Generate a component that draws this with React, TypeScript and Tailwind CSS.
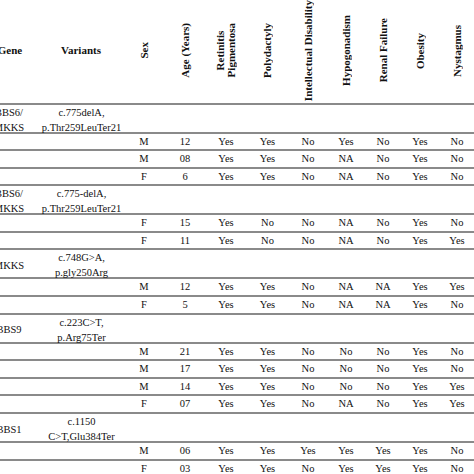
import React from "react";

type Row =
  | { kind: "group"; gene: string[]; variant: string[] }
  | { kind: "data"; cells: string[] };

const rows: Row[] = [
  { kind: "group", gene: ["BBS6/", "MKKS"], variant: ["c.775delA,", "p.Thr259LeuTer21"] },
  { kind: "data", cells: ["M", "12", "Yes", "Yes", "No", "Yes", "No", "Yes", "No"] },
  { kind: "data", cells: ["M", "08", "Yes", "Yes", "No", "NA", "No", "Yes", "No"] },
  { kind: "data", cells: ["F", "6", "Yes", "Yes", "No", "NA", "No", "Yes", "No"] },
  { kind: "group", gene: ["BBS6/", "MKKS"], variant: ["c.775-delA,", "p.Thr259LeuTer21"] },
  { kind: "data", cells: ["F", "15", "Yes", "No", "No", "NA", "No", "Yes", "No"] },
  { kind: "data", cells: ["F", "11", "Yes", "No", "No", "NA", "No", "Yes", "Yes"] },
  { kind: "group", gene: ["MKKS"], variant: ["c.748G>A,", "p.gly250Arg"] },
  { kind: "data", cells: ["M", "12", "Yes", "Yes", "No", "NA", "NA", "Yes", "Yes"] },
  { kind: "data", cells: ["F", "5", "Yes", "Yes", "No", "NA", "NA", "Yes", "No"] },
  { kind: "group", gene: ["BBS9"], variant: ["c.223C>T,", "p.Arg75Ter"] },
  { kind: "data", cells: ["M", "21", "Yes", "Yes", "No", "No", "No", "Yes", "No"] },
  { kind: "data", cells: ["M", "17", "Yes", "Yes", "No", "No", "No", "Yes", "No"] },
  { kind: "data", cells: ["M", "14", "Yes", "Yes", "No", "No", "No", "Yes", "Yes"] },
  { kind: "data", cells: ["F", "07", "Yes", "Yes", "No", "NA", "No", "Yes", "Yes"] },
  { kind: "group", gene: ["BBS1"], variant: ["c.1150", "C>T,Glu384Ter"] },
  { kind: "data", cells: ["M", "06", "Yes", "Yes", "Yes", "Yes", "Yes", "Yes", "No"] },
  { kind: "data", cells: ["F", "03", "Yes", "Yes", "No", "Yes", "Yes", "Yes", "No"] },
];

const GRID =
  "grid grid-cols-[60px_84px_42px_40px_42px_41px_40px_36px_38px_36px_38px]";

function Rot({ children }: { children: React.ReactNode }) {
  return (
    <div className="flex items-center justify-center">
      <div className="[writing-mode:vertical-rl] rotate-180 whitespace-nowrap text-center leading-[11px]">
        {children}
      </div>
    </div>
  );
}

export default function App() {
  return (
    <div
      className="w-[474px] h-[474px] overflow-hidden bg-white text-[#111111]"
      style={{ fontFamily: '"Liberation Serif", "Times New Roman", serif' }}
    >
      <div className="ml-[-21px] w-[498px]">
        <div className={`${GRID} h-[102.5px] font-bold text-[11px] pb-[2px]`}>
          <div className="flex items-center justify-center pl-[2px]">Gene</div>
          <div className="flex items-center justify-center">Variants</div>
          <Rot>Sex</Rot>
          <Rot>Age (Years)</Rot>
          <Rot>
            Retinitis
            <br />
            Pigmentosa
          </Rot>
          <Rot>Polydactyly</Rot>
          <Rot>Intellectual Disability</Rot>
          <Rot>Hypogonadism</Rot>
          <Rot>Renal Failure</Rot>
          <Rot>Obesity</Rot>
          <Rot>Nystagmus</Rot>
        </div>
        {rows.map((r, i) =>
          r.kind === "group" ? (
            <div
              key={i}
              className={`${GRID} h-[29px] border-t-2 border-[#8a8a8a] text-[10.5px] leading-[15px]`}
            >
              <div className="flex flex-col items-center justify-center text-center">
                {r.gene.map((g, j) => (
                  <div key={j}>{g}</div>
                ))}
              </div>
              <div className="flex flex-col items-center justify-center text-center pl-[1px]">
                {r.variant.map((v, j) => (
                  <div key={j} className="whitespace-nowrap">
                    {v}
                  </div>
                ))}
              </div>
            </div>
          ) : (
            <div
              key={i}
              className={`${GRID} h-[17.6px] border-t-2 border-[#8a8a8a] text-[10.5px]`}
            >
              <div />
              <div />
              {r.cells.map((c, j) => (
                <div key={j} className="flex items-center justify-center">
                  {c}
                </div>
              ))}
            </div>
          )
        )}
      </div>
    </div>
  );
}
